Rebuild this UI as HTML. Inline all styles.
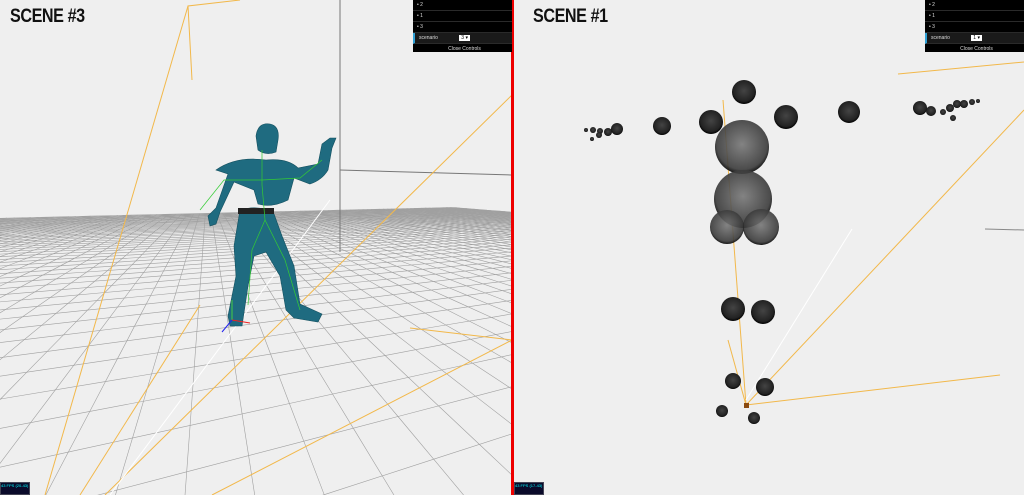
<!DOCTYPE html>
<html><head><meta charset="utf-8"><style>
html,body{margin:0;padding:0;width:1024px;height:495px;overflow:hidden;background:#efefef;font-family:"Liberation Sans",sans-serif}
svg{display:block}
.t{position:absolute;top:6px;font-weight:bold;font-size:19px;letter-spacing:-0.5px;color:#111;transform:scaleX(0.85);transform-origin:left}
.gui{position:absolute;top:0;width:99px;height:52px;overflow:hidden;background:#000;color:#ddd;font-size:5px}
.gui div{height:10px;line-height:10px;padding-left:4px;border-bottom:1px solid #2a2a2a}
.fps{position:absolute;top:482px;width:30px;height:13px;box-sizing:border-box;background:#0a0a2a;border:1px solid #445;color:#0ff;font-size:4px;overflow:hidden}
</style></head><body>
<svg width="1024" height="495" style="position:absolute;left:0;top:0">
<defs>
<radialGradient id="sp" cx="50%" cy="45%" r="55%"><stop offset="0" stop-color="#444"/><stop offset="0.8" stop-color="#222"/><stop offset="1" stop-color="#000"/></radialGradient>
<radialGradient id="sb" cx="50%" cy="45%" r="55%"><stop offset="0" stop-color="#777"/><stop offset="0.85" stop-color="#3a3a3a"/><stop offset="1" stop-color="#000"/></radialGradient>
<clipPath id="L"><rect x="0" y="0" width="511" height="495"/></clipPath>
</defs>
<g id="grid" clip-path="url(#L)" stroke="#a0a0a0" stroke-width="0.6"></g>
<g clip-path="url(#L)" fill="none" stroke-width="1">
<line x1="340" y1="0" x2="340" y2="252" stroke="#777"/>
<line x1="340" y1="170" x2="512" y2="175" stroke="#777"/>
<g stroke="#f2b84a">
<polyline points="240,0 188,6 192,80"/>
<line x1="188" y1="6" x2="45" y2="495"/>
<line x1="512" y1="95" x2="105" y2="495"/>
<line x1="410" y1="328" x2="512" y2="340"/>
<line x1="212" y1="495" x2="512" y2="340"/>
<line x1="80" y1="495" x2="200" y2="305"/>
</g>
<line x1="110" y1="495" x2="330" y2="200" stroke="#fff"/>
</g>
<g fill="#1f6b80" stroke="#14505f" stroke-width="0.6">
<path d="M256,136 q2,-14 14,-12 q10,2 8,16 l-2,12 q-10,4 -18,-2z"/>
<path d="M216,170 q20,-14 50,-10 q22,-2 32,8 l20,-4 l4,-20 l8,-6 l6,0 l-4,10 l-4,22 q-6,10 -18,14 l-16,-6 l-6,22 q-16,8 -30,4 l-4,-14 l-20,-8 l-14,30 l-4,12 l-6,2 l-2,-10 l8,-8 l12,-34z"/>
<path d="M240,210 q20,-6 34,4 l8,22 l12,30 l6,38 l22,10 l-4,8 l-24,-4 l-8,-8 l-6,-34 l-14,-24 l-12,4 l-6,30 l-6,40 l-12,0 l-2,-10 l8,-40 l-2,-30 z"/>
</g>
<rect x="238" y="208" width="36" height="6" fill="#222"/>
<g stroke="#3c3" stroke-width="0.7" fill="none"><polyline points="262,150 262,185 265,220 252,250 248,305"/><polyline points="265,220 285,260 300,310"/><polyline points="262,180 224,180 200,210"/><polyline points="262,180 300,178 322,160"/></g>
<line x1="232" y1="320" x2="232" y2="300" stroke="#4c4"/><line x1="232" y1="320" x2="250" y2="323" stroke="#e22"/><line x1="232" y1="320" x2="222" y2="332" stroke="#22e"/>
<g fill="none" stroke-width="1">
<g stroke="#f2b84a">
<line x1="723" y1="100" x2="746" y2="405"/>
<line x1="728" y1="340" x2="746" y2="405"/>
<line x1="746" y1="405" x2="1024" y2="110"/>
<line x1="746" y1="405" x2="1000" y2="375"/>
<line x1="898" y1="74" x2="1024" y2="62"/>
</g>
<line x1="746" y1="400" x2="852" y2="229" stroke="#fff"/>
<line x1="985" y1="229" x2="1024" y2="230" stroke="#888"/>
</g>
<g fill="url(#sp)">
<circle cx="744" cy="92" r="12"/><circle cx="711" cy="122" r="12"/><circle cx="786" cy="117" r="12"/>
<circle cx="662" cy="126" r="9"/><circle cx="849" cy="112" r="11"/>
<circle cx="733" cy="309" r="12"/><circle cx="763" cy="312" r="12"/>
<circle cx="733" cy="381" r="8"/><circle cx="765" cy="387" r="9"/>
<circle cx="722" cy="411" r="6"/><circle cx="754" cy="418" r="6"/>
<circle cx="617" cy="129" r="6"/><circle cx="608" cy="132" r="4"/><circle cx="600" cy="131" r="3"/><circle cx="593" cy="130" r="3"/><circle cx="586" cy="130" r="2"/><circle cx="599" cy="135" r="3"/><circle cx="592" cy="139" r="2"/>
<circle cx="920" cy="108" r="7"/><circle cx="931" cy="111" r="5"/><circle cx="943" cy="112" r="3"/><circle cx="950" cy="108" r="4"/><circle cx="957" cy="104" r="4"/><circle cx="964" cy="104" r="4"/><circle cx="972" cy="102" r="3"/><circle cx="978" cy="101" r="2"/><circle cx="953" cy="118" r="3"/>
</g>
<g fill="url(#sb)" fill-opacity="0.9">
<circle cx="742" cy="147" r="27"/><circle cx="743" cy="199" r="29"/><circle cx="727" cy="227" r="17"/><circle cx="761" cy="227" r="18"/>
</g>
<rect x="744" y="403" width="5" height="5" fill="#8a4a10"/>
<rect x="511" y="0" width="3" height="495" fill="#ee0000"/>
</svg>
<div class="t" style="left:10px">SCENE #3</div>
<div class="t" style="left:533px">SCENE #1</div>
<div class="gui" style="left:413px"><div>• 2</div><div>• 1</div><div>• 3</div><div style="border-left:2px solid #2fa1d6;background:#1a1a1a">scenario <span style="background:#fff;color:#000;padding:0 2px;margin-left:20px">3 ▾</span></div><div style="text-align:center;border:none">Close Controls</div></div>
<div class="gui" style="left:925px"><div>• 2</div><div>• 1</div><div>• 3</div><div style="border-left:2px solid #2fa1d6;background:#1a1a1a">scenario <span style="background:#fff;color:#000;padding:0 2px;margin-left:20px">1 ▾</span></div><div style="text-align:center;border:none">Close Controls</div></div>
<div class="fps" style="left:0">43 FPS (20-43)</div>
<div class="fps" style="left:514px">43 FPS (17-43)</div>
<script>
var g=document.getElementById('grid'),s='',vx=300,hy=188,f=300,h=6,a=0.3,N=55,S=1.3;
function P(X,Z){var x=X*Math.cos(a)-Z*Math.sin(a),z=X*Math.sin(a)+Z*Math.cos(a)+3;return z>0.05?[(vx+f*x/z).toFixed(1),(hy+f*h/z).toFixed(1)]:null;}
for(var i=-N;i<=N;i++){var pts=[];for(var j=-N;j<=N;j+=1){var p=P(i*S,j*S);if(p)pts.push(p.join(','));}if(pts.length>1)s+='<polyline fill="none" points="'+pts.join(' ')+'"/>';}
for(var j=-N;j<=N;j++){var pts=[];for(var i=-N;i<=N;i+=2){var p=P(i*S,j*S);if(p)pts.push(p.join(','));}if(pts.length>1)s+='<polyline fill="none" points="'+pts.join(' ')+'"/>';}
g.innerHTML=s;
</script>
</body></html>
